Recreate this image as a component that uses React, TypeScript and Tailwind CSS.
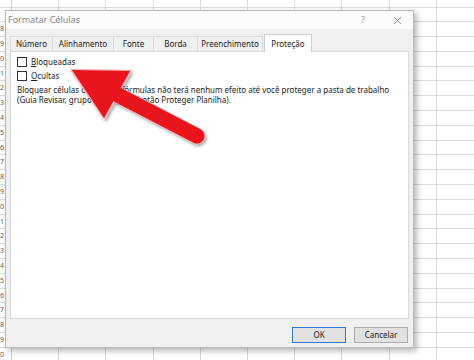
import React from 'react';

const tabs = [
  { label: 'Número', w: 'w-[43px]' },
  { label: 'Alinhamento', w: 'w-[62px]' },
  { label: 'Fonte', w: 'w-[41px]' },
  { label: 'Borda', w: 'w-[45px]' },
  { label: 'Preenchimento', w: 'w-[66px]' },
];
const rows = Array.from({ length: 24 }, (_, i) => i + 1);
const cols = Array.from({ length: 10 }, (_, i) => i);

function Sheet() {
  return (
    <div className="flex flex-col">
      <div className="flex h-[7.5px] border-b border-[#dadada]">
        <div className="w-[12px] shrink-0 border-r border-[#cfcfcf]" />
        {cols.map((c) => (
          <div key={c} className="w-[47.2px] shrink-0 border-r border-[#dadada]" />
        ))}
      </div>
      {rows.map((r) => (
        <div key={r} className="flex h-[14.8px] border-b border-[#dadada]">
          <div className="w-[12px] shrink-0 border-r border-[#cfcfcf] text-[7px] leading-[14px] text-[#666]">
            {r > 1 ? (r + 6) % 10 : ''}
          </div>
          {cols.map((c) => (
            <div key={c} className="w-[47.2px] shrink-0 border-r border-[#dadada]" />
          ))}
        </div>
      ))}
    </div>
  );
}

function Checkbox({ first, rest }: { first: string; rest: string }) {
  return (
    <label className="flex items-center gap-[4px] h-[14px]">
      <span className="w-[10px] h-[10px] border border-[#333] bg-white" />
      <span>
        <span className="underline">{first}</span>
        {rest}
      </span>
    </label>
  );
}

function Dialog() {
  return (
    <div className="absolute left-[5px] top-[10px] w-[409px] h-[338px] flex flex-col bg-[#f0f0f0] border border-[#b9b9b9] shadow-[3px_3px_6px_rgba(0,0,0,0.28)]">
      {/* title bar */}
      <div className="flex items-center h-[18px] bg-[#fbfbfb] px-[2px] text-[9px] text-[#8a8a8a]">
        <span>Formatar Células</span>
        <span className="ml-auto mr-[28px] text-[#999]">?</span>
        <svg width="9" height="9" viewBox="0 0 9 9" className="mr-[9px]">
          <path d="M1 1 L8 8 M8 1 L1 8" stroke="#888" strokeWidth="0.9" />
        </svg>
      </div>

      {/* tabs */}
      <div className="flex items-end h-[22px] pl-[4px] pr-[6px]">
        {tabs.map((t) => (
          <div
            key={t.label}
            className={`${t.w} h-[15px] flex items-center justify-center border border-b-0 border-[#d9d9d9] -mr-px bg-[#f0f0f0] text-[#222]`}
          >
            {t.label}
          </div>
        ))}
        <div className="w-[48px] h-[18px] ml-[2px] flex items-center justify-center border border-b-0 border-[#d0d0d0] bg-white text-[#222] relative top-px z-10">
          Proteção
        </div>
      </div>

      {/* panel */}
      <div className="mx-[4px] h-[268px] bg-white border border-[#d9d9d9] px-[6px] pt-[3px] text-[#222]">
        <Checkbox first="B" rest="loqueadas" />
        <Checkbox first="O" rest="cultas" />
        <p className="leading-[9.5px] mt-[2px]">
          Bloquear células ou ocultar fórmulas não terá nenhum efeito até você proteger a pasta de trabalho
          <br />
          (Guia Revisar, grupo Alterações, botão Proteger Planilha).
        </p>
      </div>

      {/* buttons */}
      <div className="flex justify-end gap-[8px] pr-[5px] pt-[8px]">
        <button className="w-[54px] h-[16px] bg-[#e1e1e1] border-[1.5px] border-[#2f7ad0] text-[#222]">OK</button>
        <button className="w-[54px] h-[16px] bg-[#e1e1e1] border border-[#adadad] text-[#222]">Cancelar</button>
      </div>
    </div>
  );
}

function Arrow() {
  return (
    <svg className="absolute left-0 top-0 pointer-events-none" width="474" height="360" viewBox="0 0 474 360">
      <defs>
        <filter id="sh" x="-20%" y="-20%" width="140%" height="140%">
          <feDropShadow dx="1.5" dy="2" stdDeviation="1.5" floodColor="#000" floodOpacity="0.35" />
        </filter>
      </defs>
      <g filter="url(#sh)">
        <line x1="117" y1="94.5" x2="197" y2="136" stroke="#f4b3b3" strokeWidth="16.5" strokeLinecap="round" />
        <polygon points="71,69.5 131,70.5 104.5,119" fill="#f4b3b3" stroke="#f4b3b3" strokeWidth="1.5" strokeLinejoin="round" />
        <line x1="117" y1="94.5" x2="197" y2="136" stroke="#e8151b" strokeWidth="15" strokeLinecap="round" />
        <polygon points="72,70 130,71 104,118" fill="#e8151b" />
      </g>
    </svg>
  );
}

export default function App() {
  return (
    <div
      className="relative w-[474px] h-[360px] overflow-hidden bg-white text-[8px]"
      style={{ fontFamily: '"Noto Sans", "DejaVu Sans", sans-serif' }}
    >
      <Sheet />
      <Dialog />
      <Arrow />
    </div>
  );
}
